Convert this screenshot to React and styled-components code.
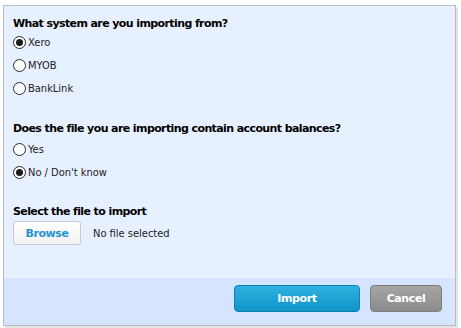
import React, { useState } from 'react'
import styled, { createGlobalStyle } from 'styled-components'

const GlobalStyle = createGlobalStyle`
  body {
    margin: 0;
    background: #ffffff;
    font-family: "DejaVu Sans Condensed", "DejaVu Sans", Verdana, sans-serif;
  }
`

const Page = styled.div`
  padding: 5px 5px 0 3px;
  width: 461px;
  height: 328px;
  box-sizing: border-box;
`

const Dialog = styled.div`
  width: 453px;
  height: 321px;
  box-sizing: border-box;
  border: 1px solid #b9bcc2;
  background: #e6f0ff;
  display: flex;
  flex-direction: column;
  box-shadow: 2px 2px 0 #e4e4e4;
`

const Body = styled.div`
  flex: 1;
  padding: 11px 9px 0 9px;
`

const Question = styled.div`
  font-size: 11px;
  font-weight: bold;
  color: #000;
  margin-top: ${props => props.$above}px;
  margin-bottom: ${props => props.$below}px;
  font-family: "DejaVu Sans", Verdana, sans-serif;
  letter-spacing: -0.6px;
`

const Option = styled.label`
  display: flex;
  align-items: center;
  height: 23px;
  font-size: 11px;
  font-family: "DejaVu Sans Condensed", "DejaVu Sans", Verdana, sans-serif;
  color: #222;
  cursor: pointer;
`

const Radio = styled.span`
  width: 11px;
  height: 11px;
  border-radius: 50%;
  border: 1px solid #2a2a2a;
  background: #fff;
  margin-right: 2px;
  display: flex;
  align-items: center;
  justify-content: center;
  &::after {
    content: '';
    width: 7px;
    height: 7px;
    border-radius: 50%;
    background: ${props => props.$checked ? '#1c1c1c' : 'transparent'};
  }
`

const FileRow = styled.div`
  display: flex;
  align-items: center;
`

const BrowseButton = styled.button`
  width: 68px;
  height: 24px;
  border: 1px solid #c8ccd2;
  border-radius: 3px;
  background: linear-gradient(#ffffff, #f2f2f2);
  color: #1e95cf;
  font-weight: bold;
  font-size: 11px;
  font-family: "DejaVu Sans", Verdana, sans-serif;
  letter-spacing: -0.4px;
  padding: 0;
  cursor: pointer;
`

const FileName = styled.span`
  margin-left: 12px;
  font-size: 11px;
  font-family: "DejaVu Sans Condensed", "DejaVu Sans", Verdana, sans-serif;
  color: #222;
`

const Footer = styled.div`
  height: 47px;
  background: #d6e5ff;
  display: flex;
  justify-content: flex-end;
  align-items: flex-start;
  padding: 7px 13px 0 0;
  box-sizing: border-box;
  gap: 10px;
`

const ActionButton = styled.button`
  height: 27px;
  width: ${props => props.$primary ? '126px' : '72px'};
  border-radius: 4px;
  border: 1px solid ${props => props.$primary ? '#0d7fb0' : '#7d7d7d'};
  background: ${props => props.$primary
    ? 'linear-gradient(#2fb0e0, #0f95cb)'
    : 'linear-gradient(#a5a5a5, #8c8c8c)'};
  color: #fff;
  font-weight: bold;
  font-size: 11px;
  font-family: "DejaVu Sans", Verdana, sans-serif;
  letter-spacing: -0.4px;
  padding: 0;
  cursor: pointer;
`

function RadioGroup({ options, value, onChange }) {
  return options.map(opt => (
    <Option key={opt} onClick={() => onChange(opt)}>
      <Radio $checked={value === opt} />
      {opt}
    </Option>
  ))
}

export default function App() {
  const [system, setSystem] = useState('Xero')
  const [balances, setBalances] = useState("No / Don't know")
  return (
    <>
      <GlobalStyle />
      <Page>
        <Dialog>
          <Body>
            <Question $above={0} $below={1}>What system are you importing from?</Question>
            <RadioGroup options={['Xero', 'MYOB', 'BankLink']} value={system} onChange={setSystem} />
            <Question $above={22} $below={3}>Does the file you are importing contain account balances?</Question>
            <RadioGroup options={['Yes', "No / Don't know"]} value={balances} onChange={setBalances} />
            <Question $above={21} $below={3}>Select the file to import</Question>
            <FileRow>
              <BrowseButton>Browse</BrowseButton>
              <FileName>No file selected</FileName>
            </FileRow>
          </Body>
          <Footer>
            <ActionButton $primary>Import</ActionButton>
            <ActionButton>Cancel</ActionButton>
          </Footer>
        </Dialog>
      </Page>
    </>
  )
}
